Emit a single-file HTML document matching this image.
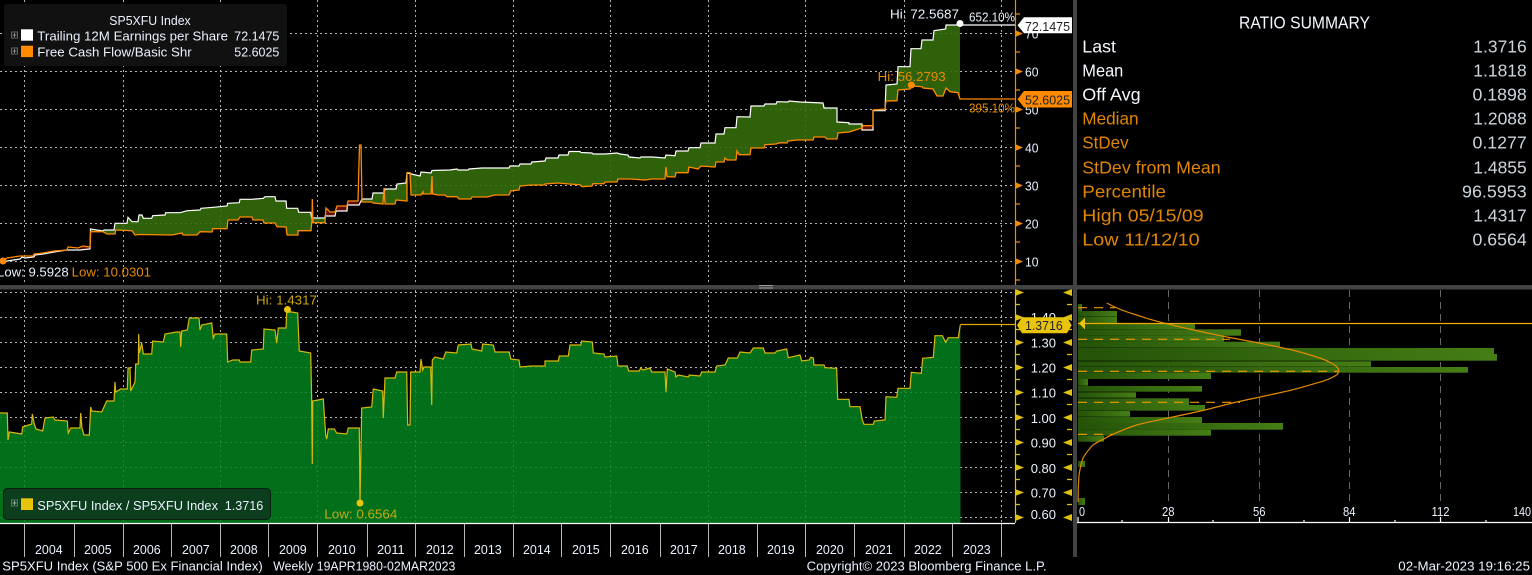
<!DOCTYPE html>
<html><head><meta charset="utf-8"><title>SP5XFU Index</title>
<style>
html,body{margin:0;padding:0;background:#000;width:1532px;height:575px;overflow:hidden}
svg{display:block}
text{font-family:"Liberation Sans",sans-serif;font-size:13px;fill:#eaf2ff;white-space:pre}
.s{font-size:12.5px}
.o{fill:#e68a00}
.y{fill:#c8a810}
.p{font-size:17.5px;fill:#f4f8ff}
.po{font-size:17.5px;fill:#e08600}
.pv{font-size:17.5px;fill:#ccd4dc}
.d{fill:#222}
</style></head>
<body>
<svg width="1532" height="575" viewBox="0 0 1532 575" xmlns="http://www.w3.org/2000/svg">
<defs>
<linearGradient id="hb" x1="0" x2="1" y1="0" y2="0"><stop offset="0" stop-color="#245308"/><stop offset="1" stop-color="#457d15"/></linearGradient>
<mask id="gm" maskUnits="userSpaceOnUse" x="0" y="0" width="1532" height="575">
<path fill="#fff" d="M0 262L7 261L20 259L22 257L25 258L34 257L35 255L43 254L54 252L67 250L80 250L90 249L90.5 229L103 231L104 230L114 230L115 223.3L127 223.3L128 217.3L132 221.7L138 221.7L139 215L142 215L143.3 218.3L151.7 218.3L152.7 215.7L165 215L165.7 212.7L180 212.7L187.3 210.7L200 210L201 208.3L213.3 207.3L227 206L227.7 203.3L239.3 202.7L240 199.3L251.7 199.3L263.3 198.3L265 196.7L275 196.7L276 201L286 201L286.7 208.3L297.7 208.3L298.7 212.3L310.7 212.3L311.7 218L325 218L325 216L335 216L336 211L347 211L347.3 205L359 205L362 199L372 199L373 193L384 193L385 189L396 189L397 184L406 183L407 173L420 176L421 172L431 173L432 170.5L450 170L457 169L458 170L468 170L469 169L482 168L509 168L510 166L519 166L520 164L531 164L532 162L545 161L546 158L558 158L559 155L568 155L569 151.5L580 151.5L581 152.5L592 153L593 154L605 154L617 153L620 154L628 155L629 157L640 158L641 157L652 157L665 158L666 155L675 155.7L676 151L688 151L689 147.7L700 147.7L701 143L715 143L716 134L724 134L725 127.7L736 127.7L737 116.7L750 117L751 106L764 106L765 104L776 104L777 101.7L788 102L789 101L800 102L823 103L824 108L837 108L837 122L849 122.7L849 124L862 124L862 130L873 130L873 110.7L885 110.7L886 85L897 84L898 66.7L910 66.7L911 48.7L921 48.7L922 40L933 40L934 30.7L945.7 29L946 25L960 25L960 285L0 285Z"/>
<path fill="#000" d="M0 262L7 258L20 256L33 256L34 254L43 253L54 251L67 250L68 247L78 248L83 246L90 247L90.7 231.7L103 231.7L107 234L115 234L115.7 230L132 230.7L135 235L140 234.5L172 235L182 233L183 235L197 235L200 231.7L212 232L213 228.7L227 228.7L228 220L238 220L240 217L252 217L253 220L263 220L264 223L275 223L277 226.7L286 227L287 235L298 235L298 230.7L311 230.7L312 220L312.3 199L313 222.7L325 222.7L326 208L330 212L335 212L337 206L347 206L348 201L358 201L359.5 145L361 145L362 202L372 202L373 203L383 204L384 188L385 204L395 204L396 200L407 201L407 172.7L410 172.7L411 195L421 195L423 192L423 194L431 194L432 176L432.5 194L438 195L445 195L447 196.7L457 196.7L459 199L471 199L472 197L483 197L487 197L495 195L509 195L511 190.7L519 190L520 186L532 185L544 185L545 184L558 183L569 184L580 184.7L582 186.7L592 186L593 183.7L604 183.7L605 182L617 182L618 179L630 179L645 180L652 179L665 179L666 167L667 176.7L675 177L676 172.7L688 172.7L689 167L698 169L701 166L715 167L716 162L724 162L725 158L727 160L736 160L737 151L739 154.7L750 154.7L751 148L764 148L765 144.7L776 144L780 142.7L787 143L788 141L797 140L813 140L814 137L825 137L827 139L837 139L838 133L849 132L862 128L863 125.7L873 125.7L873 110L885 109L886 101L897 100.7L898 90L910 89L912 86L922 86.7L923 88L933 89L937 96L943 96L946 88L950 91.7L958 92.7L960 99L960 285L0 285Z"/>
</mask>
</defs>

<!-- top grid -->
<path stroke="#b4b4b4" stroke-width="1" stroke-dasharray="2 3" fill="none" d="M0 33.5H1015M0 71.5H1015M0 109.5H1015M0 147.5H1015M0 185.5H1015M0 223.5H1015M0 261.5H1015M24.5 0V285M123.5 0V285M220.5 0V285M317.5 0V285M415.5 0V285M513.5 0V285M610.5 0V285M708.5 0V285M805.5 0V285M904.5 0V285M1001.5 0V285"/>

<rect x="0" y="0" width="1016" height="285" fill="#346c0c" fill-opacity=".9" mask="url(#gm)"/>
<path fill="#5e0c04" d="M83 246L90 247L90 249L80 250ZM326 208L330 212L335 212L337 206L347 206L348 201L358 201L359 205L347.3 205L347 211L336 211L335 216L325 216ZM863 125.7L873 125.7L873 130L862 130Z"/>

<path fill="none" stroke="#fff" stroke-width="1.2" d="M0 262L7 261L20 259L22 257L25 258L34 257L35 255L43 254L54 252L67 250L80 250L90 249L90.5 229L103 231L104 230L114 230L115 223.3L127 223.3L128 217.3L132 221.7L138 221.7L139 215L142 215L143.3 218.3L151.7 218.3L152.7 215.7L165 215L165.7 212.7L180 212.7L187.3 210.7L200 210L201 208.3L213.3 207.3L227 206L227.7 203.3L239.3 202.7L240 199.3L251.7 199.3L263.3 198.3L265 196.7L275 196.7L276 201L286 201L286.7 208.3L297.7 208.3L298.7 212.3L310.7 212.3L311.7 218L325 218L325 216L335 216L336 211L347 211L347.3 205L359 205L362 199L372 199L373 193L384 193L385 189L396 189L397 184L406 183L407 173L420 176L421 172L431 173L432 170.5L450 170L457 169L458 170L468 170L469 169L482 168L509 168L510 166L519 166L520 164L531 164L532 162L545 161L546 158L558 158L559 155L568 155L569 151.5L580 151.5L581 152.5L592 153L593 154L605 154L617 153L620 154L628 155L629 157L640 158L641 157L652 157L665 158L666 155L675 155.7L676 151L688 151L689 147.7L700 147.7L701 143L715 143L716 134L724 134L725 127.7L736 127.7L737 116.7L750 117L751 106L764 106L765 104L776 104L777 101.7L788 102L789 101L800 102L823 103L824 108L837 108L837 122L849 122.7L849 124L862 124L862 130L873 130L873 110.7L885 110.7L886 85L897 84L898 66.7L910 66.7L911 48.7L921 48.7L922 40L933 40L934 30.7L945.7 29L946 25L960 25L1015 25"/>
<path fill="none" stroke="#ff8a00" stroke-width="1.3" d="M0 262L7 258L20 256L33 256L34 254L43 253L54 251L67 250L68 247L78 248L83 246L90 247L90.7 231.7L103 231.7L107 234L115 234L115.7 230L132 230.7L135 235L140 234.5L172 235L182 233L183 235L197 235L200 231.7L212 232L213 228.7L227 228.7L228 220L238 220L240 217L252 217L253 220L263 220L264 223L275 223L277 226.7L286 227L287 235L298 235L298 230.7L311 230.7L312 220L312.3 199L313 222.7L325 222.7L326 208L330 212L335 212L337 206L347 206L348 201L358 201L359.5 145L361 145L362 202L372 202L373 203L383 204L384 188L385 204L395 204L396 200L407 201L407 172.7L410 172.7L411 195L421 195L423 192L423 194L431 194L432 176L432.5 194L438 195L445 195L447 196.7L457 196.7L459 199L471 199L472 197L483 197L487 197L495 195L509 195L511 190.7L519 190L520 186L532 185L544 185L545 184L558 183L569 184L580 184.7L582 186.7L592 186L593 183.7L604 183.7L605 182L617 182L618 179L630 179L645 180L652 179L665 179L666 167L667 176.7L675 177L676 172.7L688 172.7L689 167L698 169L701 166L715 167L716 162L724 162L725 158L727 160L736 160L737 151L739 154.7L750 154.7L751 148L764 148L765 144.7L776 144L780 142.7L787 143L788 141L797 140L813 140L814 137L825 137L827 139L837 139L838 133L849 132L862 128L863 125.7L873 125.7L873 110L885 109L886 101L897 100.7L898 90L910 89L912 86L922 86.7L923 88L933 89L937 96L943 96L946 88L950 91.7L958 92.7L960 99L1015 99"/>

<circle cx="3" cy="261" r="3.5" fill="#ff8a00"/>
<circle cx="960" cy="23.5" r="3.5" fill="#fff"/>
<circle cx="911.3" cy="85" r="3.5" fill="#ff8a00"/>

<!-- top axis -->
<path stroke="#f08a00" stroke-width="1.2" fill="none" d="M1015.5 0V285M1015 14h5M1015 52h5M1015 90h5M1015 128h5M1015 166h5M1015 204h5M1015 242h5M1015 280h5"/>
<path fill="#f08a00" d="M1015 30L1023 33.5L1015 37ZM1015 68L1023 71.5L1015 75ZM1015 106L1023 109.5L1015 113ZM1015 144L1023 147.5L1015 151ZM1015 182L1023 185.5L1015 189ZM1015 220L1023 223.5L1015 227ZM1015 258L1023 261.5L1015 265Z"/>
<text x="1025" y="38.7" textLength="13.5" lengthAdjust="spacingAndGlyphs">70</text>
<text x="1025" y="76.7" textLength="13.5" lengthAdjust="spacingAndGlyphs">60</text>
<text x="1025" y="114.7" textLength="13.5" lengthAdjust="spacingAndGlyphs">50</text>
<text x="1025" y="152.7" textLength="13.5" lengthAdjust="spacingAndGlyphs">40</text>
<text x="1025" y="190.7" textLength="13.5" lengthAdjust="spacingAndGlyphs">30</text>
<text x="1025" y="228.7" textLength="13.5" lengthAdjust="spacingAndGlyphs">20</text>
<text x="1025" y="266.7" textLength="13.5" lengthAdjust="spacingAndGlyphs">10</text>

<!-- top labels -->
<text x="-3" y="276.7" textLength="71.7" lengthAdjust="spacingAndGlyphs">Low: 9.5928</text>
<text class="o" x="71.7" y="276.7" textLength="79.3" lengthAdjust="spacingAndGlyphs">Low: 10.0301</text>
<text x="890" y="18.3" textLength="69" lengthAdjust="spacingAndGlyphs">Hi: 72.5687</text>
<text x="969" y="21.7" textLength="46" lengthAdjust="spacingAndGlyphs">652.10%</text>
<text class="o" x="877.7" y="81" textLength="68" lengthAdjust="spacingAndGlyphs">Hi: 56.2793</text>
<text class="o" x="969" y="112.7" textLength="46" lengthAdjust="spacingAndGlyphs">395.10%</text>

<path fill="#fff" d="M1024 17.3H1072V33.3H1024L1017.5 25.3Z"/>
<text class="d" x="1025" y="31" textLength="45" lengthAdjust="spacingAndGlyphs">72.1475</text>
<path fill="#ff8a00" d="M1024 91H1072V107.5H1024L1017.5 99.3Z"/>
<text class="d" x="1025" y="104.3" textLength="45" lengthAdjust="spacingAndGlyphs">52.6025</text>

<!-- top legend -->
<rect x="4" y="4" width="283" height="62" rx="3" fill="#111"/>
<text x="109.3" y="25" textLength="81.4" lengthAdjust="spacingAndGlyphs">SP5XFU Index</text>
<rect x="11.5" y="32" width="6" height="6" fill="none" stroke="#666"/>
<path stroke="#888" d="M12.5 35h4M14.5 33v4"/>
<rect x="21" y="29.3" width="12" height="11.4" fill="#fff"/>
<text x="37.3" y="40.7" textLength="190.7" lengthAdjust="spacingAndGlyphs">Trailing 12M Earnings per Share</text>
<text x="234.3" y="40.7" textLength="45" lengthAdjust="spacingAndGlyphs">72.1475</text>
<rect x="11.5" y="48" width="6" height="6" fill="none" stroke="#666"/>
<path stroke="#888" d="M12.5 51h4M14.5 49v4"/>
<rect x="21" y="45.7" width="12" height="11.4" fill="#ff8a00"/>
<text x="37.3" y="56.7" textLength="154.4" lengthAdjust="spacingAndGlyphs">Free Cash Flow/Basic Shr</text>
<text x="234.3" y="56.7" textLength="45" lengthAdjust="spacingAndGlyphs">52.6025</text>

<!-- lower grid -->
<path stroke="#b4b4b4" stroke-width="1" stroke-dasharray="2 3" fill="none" d="M0 292.5H1015M0 317.5H1015M0 342.5H1015M0 367.5H1015M0 392.5H1015M0 417.5H1015M0 442.5H1015M0 467.5H1015M0 492.5H1015M0 517.5H1015M24.5 290V523M123.5 290V523M220.5 290V523M317.5 290V523M415.5 290V523M513.5 290V523M610.5 290V523M708.5 290V523M805.5 290V523M904.5 290V523M1001.5 290V523"/>

<path fill="#028420" fill-opacity=".85" d="M0 413L7.3 413L8 440L9.3 432L21.7 434L22.7 427L31.7 424L32.3 414L34.3 424L36 429L42.7 431L45 418L53.3 417L55 420L67.3 421L68.3 433L70.7 428L80 428L80.7 413L82 428L84 435L89.3 435L90.7 407L91.7 411L101.7 412L106.7 401L114 401L115 382L115.7 392L120.7 389L127.3 389L128 368L130 368L130.7 391L135 382L135.7 364L138.3 364L138.7 334L139.3 353L141.7 343L143.3 354L151.7 354L152.7 341L163.3 342L165 334L176.7 332L180 332L180.7 347L181.7 331L187.3 330L189.3 318L199 318L200 330L201.7 325L211.7 323L213.3 338L215 334L226.7 334L227.7 362L232.7 360L239.3 360L240 362L250.7 362L251.7 350L263.3 349L264 329L275 330L276.7 343L278.3 328L286 328L286.7 312L291.7 312L297.7 313L299.3 351L310.7 353L311.7 400L312.3 464L312.7 401L323.3 399L325.7 435L326.7 439L328.3 429L334.3 429L336.7 433L346.7 434L348.3 428L359.3 428L360 503L361.7 408L371.7 407L373.3 389L382.7 391L383.3 418L385 378L395 378L396.7 372L406.7 372L407.7 425L410 425L410.7 372L420 372L421 359L422.7 370L424 367L430.7 367L431.7 405L432.3 360L435 357L443.3 359L445.7 352L456.7 353L458.3 345L471 344L472 349L481.7 351L482.7 344L493.3 345L495 352L509.3 352L510.7 359L519 360L520 367L531.7 366L545 366L545 361L558.3 361L559.3 356L568.3 356L570 345L580.7 345L581.7 341L592.3 342L593.3 353L604 354L605 357L616.7 356L618 366L627.3 366L628.7 371L639.3 371L640.7 368L642.7 370L650 368L651.7 372L665 372L666 392L667.3 369L675 372L676 377L678.3 375L688.3 377L689.3 375L700 376L701.7 372L715 372L716.7 366L725 365L728.3 358L737.3 358L740 352L750 353L753.3 348L763.3 348L765 353L775 353L776.7 351L786.7 349L788.3 357.7L800 355L801.7 361L809.3 360L810.7 357.3L813.3 358L814 365L824 365L825 367.7L836.7 368.3L837.7 399.3L849 399.3L850 406.7L860 406.7L862.3 420L864 424.3L873.3 424.3L874.3 421L885 420L886 396.7L896.7 397.3L898 388.3L910 388.3L911.3 372.3L921.3 373.3L922.7 358.3L933.3 357.3L935 335.7L942.3 335.7L945.7 342.3L948.3 337.7L958.3 337.7L960.3 325L960.5 523L0 523Z"/>
<path fill="none" stroke="#d8b80c" stroke-width="1.2" d="M0 413L7.3 413L8 440L9.3 432L21.7 434L22.7 427L31.7 424L32.3 414L34.3 424L36 429L42.7 431L45 418L53.3 417L55 420L67.3 421L68.3 433L70.7 428L80 428L80.7 413L82 428L84 435L89.3 435L90.7 407L91.7 411L101.7 412L106.7 401L114 401L115 382L115.7 392L120.7 389L127.3 389L128 368L130 368L130.7 391L135 382L135.7 364L138.3 364L138.7 334L139.3 353L141.7 343L143.3 354L151.7 354L152.7 341L163.3 342L165 334L176.7 332L180 332L180.7 347L181.7 331L187.3 330L189.3 318L199 318L200 330L201.7 325L211.7 323L213.3 338L215 334L226.7 334L227.7 362L232.7 360L239.3 360L240 362L250.7 362L251.7 350L263.3 349L264 329L275 330L276.7 343L278.3 328L286 328L286.7 312L291.7 312L297.7 313L299.3 351L310.7 353L311.7 400L312.3 464L312.7 401L323.3 399L325.7 435L326.7 439L328.3 429L334.3 429L336.7 433L346.7 434L348.3 428L359.3 428L360 503L361.7 408L371.7 407L373.3 389L382.7 391L383.3 418L385 378L395 378L396.7 372L406.7 372L407.7 425L410 425L410.7 372L420 372L421 359L422.7 370L424 367L430.7 367L431.7 405L432.3 360L435 357L443.3 359L445.7 352L456.7 353L458.3 345L471 344L472 349L481.7 351L482.7 344L493.3 345L495 352L509.3 352L510.7 359L519 360L520 367L531.7 366L545 366L545 361L558.3 361L559.3 356L568.3 356L570 345L580.7 345L581.7 341L592.3 342L593.3 353L604 354L605 357L616.7 356L618 366L627.3 366L628.7 371L639.3 371L640.7 368L642.7 370L650 368L651.7 372L665 372L666 392L667.3 369L675 372L676 377L678.3 375L688.3 377L689.3 375L700 376L701.7 372L715 372L716.7 366L725 365L728.3 358L737.3 358L740 352L750 353L753.3 348L763.3 348L765 353L775 353L776.7 351L786.7 349L788.3 357.7L800 355L801.7 361L809.3 360L810.7 357.3L813.3 358L814 365L824 365L825 367.7L836.7 368.3L837.7 399.3L849 399.3L850 406.7L860 406.7L862.3 420L864 424.3L873.3 424.3L874.3 421L885 420L886 396.7L896.7 397.3L898 388.3L910 388.3L911.3 372.3L921.3 373.3L922.7 358.3L933.3 357.3L935 335.7L942.3 335.7L945.7 342.3L948.3 337.7L958.3 337.7L960.3 325"/>
<path fill="none" stroke="#e8a400" stroke-width="1.2" d="M960.3 324.5H1015"/>
<circle cx="287.5" cy="309.5" r="3.5" fill="#e8c40c"/>
<circle cx="360" cy="503" r="3.5" fill="#e8c40c"/>
<text class="y" x="256" y="304.3" textLength="61" lengthAdjust="spacingAndGlyphs">Hi: 1.4317</text>
<text class="y" x="324.3" y="518.3" textLength="73" lengthAdjust="spacingAndGlyphs">Low: 0.6564</text>

<!-- lower legend -->
<rect x="3.5" y="488.5" width="267" height="31" rx="4" fill="#0c3d1c" stroke="#0a1f10"/>
<rect x="11.5" y="500" width="6" height="6" fill="none" stroke="#5a7a64"/>
<path stroke="#9ab0a0" d="M12.5 503h4M14.5 501v4"/>
<rect x="21" y="498.3" width="12" height="11.7" fill="#e8c40c"/>
<text x="37.3" y="510" textLength="180.7" lengthAdjust="spacingAndGlyphs">SP5XFU Index / SP5XFU Index</text>
<text x="224.7" y="510" textLength="38.6" lengthAdjust="spacingAndGlyphs">1.3716</text>

<!-- lower axis -->
<path stroke="#e0c010" stroke-width="1.2" fill="none" d="M1015.5 290V523M1015 304.5h5M1015 329.5h5M1015 354.5h5M1015 379.5h5M1015 404.5h5M1015 429.5h5M1015 454.5h5M1015 479.5h5M1015 504.5h5M1067 304.5h5M1067 329.5h5M1067 354.5h5M1067 379.5h5M1067 404.5h5M1067 429.5h5M1067 454.5h5M1067 479.5h5M1067 504.5h5"/>
<path fill="#e0c010" d="M1015 289L1024 292.5L1015 296ZM1015 314L1024 317.5L1015 321ZM1015 339L1024 342.5L1015 346ZM1015 364L1024 367.5L1015 371ZM1015 389L1024 392.5L1015 396ZM1015 414L1024 417.5L1015 421ZM1015 439L1024 442.5L1015 446ZM1015 464L1024 467.5L1015 471ZM1015 489L1024 492.5L1015 496ZM1015 514L1024 517.5L1015 521ZM1072 289L1063 292.5L1072 296ZM1072 314L1063 317.5L1072 321ZM1072 339L1063 342.5L1072 346ZM1072 364L1063 367.5L1072 371ZM1072 389L1063 392.5L1072 396ZM1072 414L1063 417.5L1072 421ZM1072 439L1063 442.5L1072 446ZM1072 464L1063 467.5L1072 471ZM1072 489L1063 492.5L1072 496ZM1072 514L1063 517.5L1072 521Z"/>
<text x="1030.7" y="322" textLength="25.3" lengthAdjust="spacingAndGlyphs">1.40</text>
<text x="1030.7" y="347.7" textLength="25.3" lengthAdjust="spacingAndGlyphs">1.30</text>
<text x="1030.7" y="372.7" textLength="25.3" lengthAdjust="spacingAndGlyphs">1.20</text>
<text x="1030.7" y="397.7" textLength="25.3" lengthAdjust="spacingAndGlyphs">1.10</text>
<text x="1030.7" y="423" textLength="25.3" lengthAdjust="spacingAndGlyphs">1.00</text>
<text x="1030.7" y="447.7" textLength="25.3" lengthAdjust="spacingAndGlyphs">0.90</text>
<text x="1030.7" y="473" textLength="25.3" lengthAdjust="spacingAndGlyphs">0.80</text>
<text x="1030.7" y="497.7" textLength="25.3" lengthAdjust="spacingAndGlyphs">0.70</text>
<text x="1030.7" y="519" textLength="25.3" lengthAdjust="spacingAndGlyphs">0.60</text>
<path fill="#e8c40c" d="M1022 317.3H1067L1071.7 325.3L1067 333.3H1022L1017 325.3Z"/>
<text class="d" x="1025" y="330" textLength="37.7" lengthAdjust="spacingAndGlyphs">1.3716</text>

<!-- x axis -->
<path stroke="#fff" stroke-width="1.2" fill="none" d="M0 523.5H1015"/>
<path stroke="#b8b8b8" stroke-width="1" fill="none" d="M24.5 524V557M74.5 524V557M123.5 524V557M171.5 524V557M220.5 524V557M268.5 524V557M317.5 524V557M367.5 524V557M415.5 524V557M464.5 524V557M513.5 524V557M561.5 524V557M610.5 524V557M660.5 524V557M708.5 524V557M757.5 524V557M805.5 524V557M854.5 524V557M904.5 524V557M952.5 524V557M1001.5 524V557"/>
<text x="35" y="554" textLength="27.7" lengthAdjust="spacingAndGlyphs">2004</text>
<text x="84" y="554" textLength="27.7" lengthAdjust="spacingAndGlyphs">2005</text>
<text x="133" y="554" textLength="27.7" lengthAdjust="spacingAndGlyphs">2006</text>
<text x="182" y="554" textLength="27.7" lengthAdjust="spacingAndGlyphs">2007</text>
<text x="230" y="554" textLength="27.7" lengthAdjust="spacingAndGlyphs">2008</text>
<text x="279" y="554" textLength="27.7" lengthAdjust="spacingAndGlyphs">2009</text>
<text x="328" y="554" textLength="27.7" lengthAdjust="spacingAndGlyphs">2010</text>
<text x="377" y="554" textLength="27.7" lengthAdjust="spacingAndGlyphs">2011</text>
<text x="426" y="554" textLength="27.7" lengthAdjust="spacingAndGlyphs">2012</text>
<text x="474" y="554" textLength="27.7" lengthAdjust="spacingAndGlyphs">2013</text>
<text x="523" y="554" textLength="27.7" lengthAdjust="spacingAndGlyphs">2014</text>
<text x="572" y="554" textLength="27.7" lengthAdjust="spacingAndGlyphs">2015</text>
<text x="621" y="554" textLength="27.7" lengthAdjust="spacingAndGlyphs">2016</text>
<text x="670" y="554" textLength="27.7" lengthAdjust="spacingAndGlyphs">2017</text>
<text x="718" y="554" textLength="27.7" lengthAdjust="spacingAndGlyphs">2018</text>
<text x="767" y="554" textLength="27.7" lengthAdjust="spacingAndGlyphs">2019</text>
<text x="816" y="554" textLength="27.7" lengthAdjust="spacingAndGlyphs">2020</text>
<text x="865" y="554" textLength="27.7" lengthAdjust="spacingAndGlyphs">2021</text>
<text x="914" y="554" textLength="27.7" lengthAdjust="spacingAndGlyphs">2022</text>
<text x="963" y="554" textLength="27.7" lengthAdjust="spacingAndGlyphs">2023</text>

<!-- histogram -->
<path stroke="#666" stroke-width="1" stroke-dasharray="7 5" fill="none" d="M1168.5 290V503M1259.5 290V503M1349.5 290V503M1440.5 290V503"/>
<g fill="url(#hb)">
<rect x="1078" y="304" width="4" height="7"/>
<rect x="1078" y="311" width="39" height="5.7"/>
<rect x="1078" y="317" width="39" height="6"/>
<rect x="1078" y="323.5" width="117" height="5.7"/>
<rect x="1078" y="329.3" width="163" height="6.4"/>
<rect x="1078" y="335.7" width="146" height="6"/>
<rect x="1078" y="341.7" width="202" height="6"/>
<rect x="1078" y="348" width="416" height="6"/>
<rect x="1078" y="354" width="419" height="6.7"/>
<rect x="1078" y="361.3" width="293" height="5.4"/>
<rect x="1078" y="367" width="390" height="5.7"/>
<rect x="1078" y="372.7" width="133" height="6.3"/>
<rect x="1078" y="379" width="10" height="6.7"/>
<rect x="1078" y="386" width="124" height="5.7"/>
<rect x="1078" y="392.3" width="58" height="5.4"/>
<rect x="1078" y="398.3" width="111" height="6.7"/>
<rect x="1078" y="405" width="127" height="5.7"/>
<rect x="1078" y="411" width="52" height="5.7"/>
<rect x="1078" y="417" width="124" height="6"/>
<rect x="1078" y="423" width="205" height="6.7"/>
<rect x="1078" y="429.7" width="133" height="6"/>
<rect x="1078" y="435.7" width="26" height="6"/>
<rect x="1078" y="461" width="7" height="6"/>
<rect x="1078" y="498" width="7" height="7"/>
</g>
<path stroke="#f09a00" stroke-width="1.2" stroke-dasharray="9 7" fill="none" d="M1078 307.7H1115M1078 339.3H1230M1078 371.3H1338M1078 402.3H1240M1078 434.3H1113"/>
<path fill="none" stroke="#e08a00" stroke-width="1.2" d="M1106.7 303C1116 308 1126 312 1136.7 315C1147 318.5 1157 321.5 1168 324C1188 329 1207 333 1226.7 337C1246 340.5 1265 344 1283 348C1295 350.5 1306 353.5 1316.7 357C1323 359 1328 361 1333 364C1336 366 1338.7 368 1338.7 371C1338.7 374 1336 375.5 1333 377C1328 380 1322 381.5 1316.7 383C1305 386.5 1295 389.5 1283 392C1268 395.5 1252 398.5 1236.7 402C1226 404.5 1215 407.5 1205 410C1192 413 1180 415.5 1168 418C1157 420.5 1147 422 1136.7 425C1127 428 1118 432 1110 435.7C1104 439 1098 441.5 1093 445C1089 449 1086 453 1083 458C1081 463 1080 469 1079 475C1078.3 484 1078 493 1078 502"/>
<path stroke="#f0aa00" stroke-width="1.2" fill="none" d="M1078 323.5H1532"/>
<path fill="#e8c40c" d="M1079 323.5L1085 317.5V329.5Z"/>
<path stroke="#fff" stroke-width="1.2" fill="none" d="M1077 522.5H1532M1078 517V523M1168.5 517V523M1259.5 517V523M1349.5 517V523M1440.5 517V523M1122 520V523M1213 520V523M1304 520V523M1395 520V523M1486 520V523"/>
<text class="s" x="1079" y="516" textLength="6" lengthAdjust="spacingAndGlyphs">0</text>
<text class="s" x="1162" y="516" textLength="12.5" lengthAdjust="spacingAndGlyphs">28</text>
<text class="s" x="1253" y="516" textLength="12.5" lengthAdjust="spacingAndGlyphs">56</text>
<text class="s" x="1343" y="516" textLength="12.5" lengthAdjust="spacingAndGlyphs">84</text>
<text class="s" x="1431.5" y="516" textLength="18" lengthAdjust="spacingAndGlyphs">112</text>
<text class="s" x="1513" y="516" textLength="18" lengthAdjust="spacingAndGlyphs">140</text>

<!-- right panel -->
<text class="p" x="1239" y="28.7" textLength="131" lengthAdjust="spacingAndGlyphs" style="font-size:17.5px">RATIO SUMMARY</text>
<text class="p" x="1082.3" y="52.5" textLength="33.7" lengthAdjust="spacingAndGlyphs">Last</text>
<text class="pv" x="1473.3" y="52.5" textLength="53.4" lengthAdjust="spacingAndGlyphs">1.3716</text>
<text class="p" x="1082.3" y="76.7" textLength="41" lengthAdjust="spacingAndGlyphs">Mean</text>
<text class="pv" x="1473.3" y="76.7" textLength="53.4" lengthAdjust="spacingAndGlyphs">1.1818</text>
<text class="p" x="1082.3" y="100.7" textLength="58.3" lengthAdjust="spacingAndGlyphs">Off Avg</text>
<text class="pv" x="1472.5" y="100.7" textLength="54.2" lengthAdjust="spacingAndGlyphs">0.1898</text>
<text class="po" x="1082.3" y="124.5" textLength="56.3" lengthAdjust="spacingAndGlyphs">Median</text>
<text class="pv" x="1473.3" y="124.5" textLength="53.4" lengthAdjust="spacingAndGlyphs">1.2088</text>
<text class="po" x="1082.3" y="148.5" textLength="46.3" lengthAdjust="spacingAndGlyphs">StDev</text>
<text class="pv" x="1472.5" y="148.5" textLength="54.2" lengthAdjust="spacingAndGlyphs">0.1277</text>
<text class="po" x="1082.3" y="173.7" textLength="138.3" lengthAdjust="spacingAndGlyphs">StDev from Mean</text>
<text class="pv" x="1473.3" y="173.7" textLength="53.4" lengthAdjust="spacingAndGlyphs">1.4855</text>
<text class="po" x="1082.3" y="197.7" textLength="83.7" lengthAdjust="spacingAndGlyphs">Percentile</text>
<text class="pv" x="1462" y="197.7" textLength="64.7" lengthAdjust="spacingAndGlyphs">96.5953</text>
<text class="po" x="1082.3" y="221.7" textLength="121.3" lengthAdjust="spacingAndGlyphs">High 05/15/09</text>
<text class="pv" x="1473.3" y="221.7" textLength="53.4" lengthAdjust="spacingAndGlyphs">1.4317</text>
<text class="po" x="1082.3" y="245.7" textLength="117.3" lengthAdjust="spacingAndGlyphs">Low 11/12/10</text>
<text class="pv" x="1472.5" y="245.7" textLength="54.2" lengthAdjust="spacingAndGlyphs">0.6564</text>

<!-- separators -->
<rect x="0" y="285" width="1532" height="4.5" fill="#434343"/>
<rect x="1073" y="0" width="4" height="557" fill="#434343"/>
<path stroke="#999" stroke-width="1" fill="none" d="M759 285.5H773M759 288H773"/>

<!-- footer -->
<text x="2.3" y="570.7" textLength="260.4" lengthAdjust="spacingAndGlyphs" style="font-size:12.5px">SP5XFU Index (S&amp;P 500 Ex Financial Index)</text>
<text x="273.3" y="570.7" textLength="182" lengthAdjust="spacingAndGlyphs" style="font-size:12.5px">Weekly 19APR1980-02MAR2023</text>
<text x="806.7" y="570.7" textLength="240" lengthAdjust="spacingAndGlyphs" style="font-size:12.5px">Copyright© 2023 Bloomberg Finance L.P.</text>
<text x="1398.3" y="570.7" textLength="131.7" lengthAdjust="spacingAndGlyphs" style="font-size:12.5px">02-Mar-2023 19:16:25</text>
</svg>
</body></html>
